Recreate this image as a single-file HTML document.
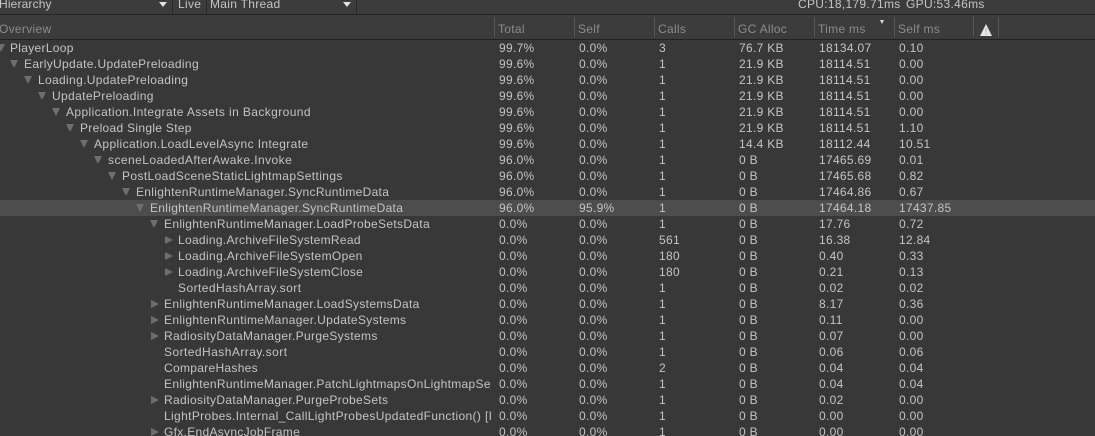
<!DOCTYPE html>
<html><head><meta charset="utf-8">
<style>
html,body{margin:0;padding:0;background:#383838;}
#p{position:relative;width:1095px;height:436px;overflow:hidden;background:#383838;font:12px/16px "Liberation Sans",sans-serif;color:#c4c4c4;letter-spacing:.3px;filter:blur(.35px);}
.a{position:absolute;white-space:nowrap;}
.r{position:absolute;left:0;width:1095px;height:16px;}
.r span{position:absolute;top:-.5px;white-space:nowrap;}
.n{overflow:hidden;height:17px;}
.c1{left:499px}.c2{left:579px}.c3{left:659px}.c4{left:739px}.c5{left:819px}.c6{left:899px}
.d,.t{position:absolute;width:0;height:0;}
.d{top:4px;border-left:4.5px solid transparent;border-right:4.5px solid transparent;border-top:8px solid #6e6e6e;}
.t{top:4px;border-top:4px solid transparent;border-bottom:4px solid transparent;border-left:8px solid #6e6e6e;}
.h{color:#8c8c8c;top:21px;}
.s{position:absolute;top:17px;height:20px;width:1px;background:#575757;}
.v{position:absolute;top:0;height:14px;width:1px;background:#2a2a2a;}
</style></head><body>
<div id="p">
<div class="a" style="left:0;top:0;width:1095px;height:14px;background:#3c3c3c;"></div>
<div class="a" style="left:0;top:14px;width:1095px;height:1px;background:#262626;"></div>
<div class="a" style="left:0;top:15px;width:1095px;height:24px;background:#3c3c3c;"></div>
<div class="a" style="left:0;top:39px;width:1095px;height:1px;background:#222;"></div>
<div class="a" style="left:-1px;top:-4px;letter-spacing:.15px">Hierarchy</div>
<div class="a" style="left:178px;top:-4px;">Live</div>
<div class="a" style="left:210px;top:-4px;">Main Thread</div>
<div class="a" style="left:798px;top:-4px;">CPU:18,179.71ms</div>
<div class="a" style="left:906px;top:-4px;">GPU:53.46ms</div>
<div class="d" style="left:159px;top:2px;border-left-width:4px;border-right-width:4px;border-top:5px solid #e0e0e0;"></div>
<div class="d" style="left:343px;top:2px;border-left-width:4px;border-right-width:4px;border-top:5px solid #e0e0e0;"></div>
<div class="v" style="left:172px"></div><div class="v" style="left:206px"></div><div class="v" style="left:356px"></div>
<div class="a h" style="left:-1px;">Overview</div>
<div class="a h" style="left:498px;">Total</div>
<div class="a h" style="left:578px;">Self</div>
<div class="a h" style="left:658px;">Calls</div>
<div class="a h" style="left:738px;">GC Alloc</div>
<div class="a h" style="left:818px;">Time ms</div>
<div class="a h" style="left:898px;">Self ms</div>
<div class="s" style="left:494px"></div><div class="s" style="left:574px"></div><div class="s" style="left:654px"></div><div class="s" style="left:734px"></div><div class="s" style="left:814px"></div><div class="s" style="left:894px"></div><div class="s" style="left:973px"></div><div class="s" style="left:998px"></div>
<div class="d" style="left:880px;top:20px;border-left-width:2.5px;border-right-width:2.5px;border-top:4px solid #dcdcdc;"></div>
<svg class="a" style="left:979px;top:23px" width="14" height="14" viewBox="0 0 14 14"><path d="M7 1 L13 13 L1 13 Z" fill="#e4e4e4"/><path d="M6.4 5 H7.6 L7.4 9.5 H6.6 Z M6.4 10.5 H7.6 V11.8 H6.4 Z" fill="#b8b8b8"/></svg>

<div class="r" style="top:40px"><i class="d" style="left:-3px"></i><span class="n" style="left:10px;width:481px">PlayerLoop</span><span class="c1">99.7%</span><span class="c2">0.0%</span><span class="c3">3</span><span class="c4">76.7 KB</span><span class="c5">18134.07</span><span class="c6">0.10</span></div>
<div class="r" style="top:56px"><i class="d" style="left:10px"></i><span class="n" style="left:24px;width:467px;letter-spacing:.34px">EarlyUpdate.UpdatePreloading</span><span class="c1">99.6%</span><span class="c2">0.0%</span><span class="c3">1</span><span class="c4">21.9 KB</span><span class="c5">18114.51</span><span class="c6">0.00</span></div>
<div class="r" style="top:72px"><i class="d" style="left:24px"></i><span class="n" style="left:38px;width:453px;letter-spacing:.34px">Loading.UpdatePreloading</span><span class="c1">99.6%</span><span class="c2">0.0%</span><span class="c3">1</span><span class="c4">21.9 KB</span><span class="c5">18114.51</span><span class="c6">0.00</span></div>
<div class="r" style="top:88px"><i class="d" style="left:38px"></i><span class="n" style="left:52px;width:439px;letter-spacing:.36px">UpdatePreloading</span><span class="c1">99.6%</span><span class="c2">0.0%</span><span class="c3">1</span><span class="c4">21.9 KB</span><span class="c5">18114.51</span><span class="c6">0.00</span></div>
<div class="r" style="top:104px"><i class="d" style="left:52px"></i><span class="n" style="left:66px;width:425px;letter-spacing:.4px">Application.Integrate Assets in Background</span><span class="c1">99.6%</span><span class="c2">0.0%</span><span class="c3">1</span><span class="c4">21.9 KB</span><span class="c5">18114.51</span><span class="c6">0.00</span></div>
<div class="r" style="top:120px"><i class="d" style="left:66px"></i><span class="n" style="left:80px;width:411px">Preload Single Step</span><span class="c1">99.6%</span><span class="c2">0.0%</span><span class="c3">1</span><span class="c4">21.9 KB</span><span class="c5">18114.51</span><span class="c6">1.10</span></div>
<div class="r" style="top:136px"><i class="d" style="left:80px"></i><span class="n" style="left:94px;width:397px;letter-spacing:.38px">Application.LoadLevelAsync Integrate</span><span class="c1">99.6%</span><span class="c2">0.0%</span><span class="c3">1</span><span class="c4">14.4 KB</span><span class="c5">18112.44</span><span class="c6">10.51</span></div>
<div class="r" style="top:152px"><i class="d" style="left:94px"></i><span class="n" style="left:108px;width:383px;letter-spacing:.44px">sceneLoadedAfterAwake.Invoke</span><span class="c1">96.0%</span><span class="c2">0.0%</span><span class="c3">1</span><span class="c4">0 B</span><span class="c5">17465.69</span><span class="c6">0.01</span></div>
<div class="r" style="top:168px"><i class="d" style="left:108px"></i><span class="n" style="left:122px;width:369px;letter-spacing:.38px">PostLoadSceneStaticLightmapSettings</span><span class="c1">96.0%</span><span class="c2">0.0%</span><span class="c3">1</span><span class="c4">0 B</span><span class="c5">17465.68</span><span class="c6">0.82</span></div>
<div class="r" style="top:184px"><i class="d" style="left:122px"></i><span class="n" style="left:136px;width:355px">EnlightenRuntimeManager.SyncRuntimeData</span><span class="c1">96.0%</span><span class="c2">0.0%</span><span class="c3">1</span><span class="c4">0 B</span><span class="c5">17464.86</span><span class="c6">0.67</span></div>
<div class="r" style="top:200px;background:#4d4d4d"><i class="d" style="left:136px"></i><span class="n" style="left:150px;width:341px">EnlightenRuntimeManager.SyncRuntimeData</span><span class="c1">96.0%</span><span class="c2">95.9%</span><span class="c3">1</span><span class="c4">0 B</span><span class="c5">17464.18</span><span class="c6">17437.85</span></div>
<div class="r" style="top:216px"><i class="d" style="left:150px"></i><span class="n" style="left:164px;width:327px;letter-spacing:.32px">EnlightenRuntimeManager.LoadProbeSetsData</span><span class="c1">0.0%</span><span class="c2">0.0%</span><span class="c3">1</span><span class="c4">0 B</span><span class="c5">17.76</span><span class="c6">0.72</span></div>
<div class="r" style="top:232px"><i class="t" style="left:165px"></i><span class="n" style="left:178px;width:313px">Loading.ArchiveFileSystemRead</span><span class="c1">0.0%</span><span class="c2">0.0%</span><span class="c3">561</span><span class="c4">0 B</span><span class="c5">16.38</span><span class="c6">12.84</span></div>
<div class="r" style="top:248px"><i class="t" style="left:165px"></i><span class="n" style="left:178px;width:313px;letter-spacing:.34px">Loading.ArchiveFileSystemOpen</span><span class="c1">0.0%</span><span class="c2">0.0%</span><span class="c3">180</span><span class="c4">0 B</span><span class="c5">0.40</span><span class="c6">0.33</span></div>
<div class="r" style="top:264px"><i class="t" style="left:165px"></i><span class="n" style="left:178px;width:313px">Loading.ArchiveFileSystemClose</span><span class="c1">0.0%</span><span class="c2">0.0%</span><span class="c3">180</span><span class="c4">0 B</span><span class="c5">0.21</span><span class="c6">0.13</span></div>
<div class="r" style="top:280px"><span class="n" style="left:178px;width:313px;letter-spacing:.45px">SortedHashArray.sort</span><span class="c1">0.0%</span><span class="c2">0.0%</span><span class="c3">1</span><span class="c4">0 B</span><span class="c5">0.02</span><span class="c6">0.02</span></div>
<div class="r" style="top:296px"><i class="t" style="left:151px"></i><span class="n" style="left:164px;width:327px;letter-spacing:.33px">EnlightenRuntimeManager.LoadSystemsData</span><span class="c1">0.0%</span><span class="c2">0.0%</span><span class="c3">1</span><span class="c4">0 B</span><span class="c5">8.17</span><span class="c6">0.36</span></div>
<div class="r" style="top:312px"><i class="t" style="left:151px"></i><span class="n" style="left:164px;width:327px;letter-spacing:.35px">EnlightenRuntimeManager.UpdateSystems</span><span class="c1">0.0%</span><span class="c2">0.0%</span><span class="c3">1</span><span class="c4">0 B</span><span class="c5">0.11</span><span class="c6">0.00</span></div>
<div class="r" style="top:328px"><i class="t" style="left:151px"></i><span class="n" style="left:164px;width:327px;letter-spacing:.33px">RadiosityDataManager.PurgeSystems</span><span class="c1">0.0%</span><span class="c2">0.0%</span><span class="c3">1</span><span class="c4">0 B</span><span class="c5">0.07</span><span class="c6">0.00</span></div>
<div class="r" style="top:344px"><span class="n" style="left:164px;width:327px;letter-spacing:.45px">SortedHashArray.sort</span><span class="c1">0.0%</span><span class="c2">0.0%</span><span class="c3">1</span><span class="c4">0 B</span><span class="c5">0.06</span><span class="c6">0.06</span></div>
<div class="r" style="top:360px"><span class="n" style="left:164px;width:327px">CompareHashes</span><span class="c1">0.0%</span><span class="c2">0.0%</span><span class="c3">2</span><span class="c4">0 B</span><span class="c5">0.04</span><span class="c6">0.04</span></div>
<div class="r" style="top:376px"><span class="n" style="left:164px;width:327px;letter-spacing:.32px">EnlightenRuntimeManager.PatchLightmapsOnLightmapSettingsChanged</span><span class="c1">0.0%</span><span class="c2">0.0%</span><span class="c3">1</span><span class="c4">0 B</span><span class="c5">0.04</span><span class="c6">0.04</span></div>
<div class="r" style="top:392px"><i class="t" style="left:151px"></i><span class="n" style="left:164px;width:327px;letter-spacing:.33px">RadiosityDataManager.PurgeProbeSets</span><span class="c1">0.0%</span><span class="c2">0.0%</span><span class="c3">1</span><span class="c4">0 B</span><span class="c5">0.02</span><span class="c6">0.00</span></div>
<div class="r" style="top:408px"><span class="n" style="left:164px;width:327px;letter-spacing:.36px">LightProbes.Internal_CallLightProbesUpdatedFunction() [Invoke]</span><span class="c1">0.0%</span><span class="c2">0.0%</span><span class="c3">1</span><span class="c4">0 B</span><span class="c5">0.00</span><span class="c6">0.00</span></div>
<div class="r" style="top:424px"><i class="t" style="left:151px"></i><span class="n" style="left:164px;width:327px">Gfx.EndAsyncJobFrame</span><span class="c1">0.0%</span><span class="c2">0.0%</span><span class="c3">1</span><span class="c4">0 B</span><span class="c5">0.00</span><span class="c6">0.00</span></div>
</div>
</body></html>
